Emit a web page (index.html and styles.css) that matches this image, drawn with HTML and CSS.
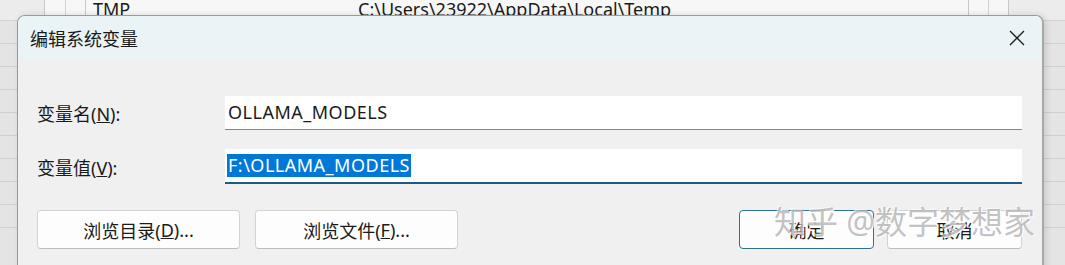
FILE: index.html
```html
<!DOCTYPE html>
<html lang="zh-CN">
<head>
<meta charset="utf-8">
<link rel="stylesheet" href="styles.css">
</head>
<body>
<div class="backdrop">
  <div class="bg-row">
    <div class="bg-gutter"></div>
    <div class="bg-cell c1"></div>
    <div class="bg-cell c2"></div>
    <div class="bg-name">TMP</div>
    <div class="bg-value">C:\Users\23922\AppData\Local\Temp</div>
    <div class="bg-cell r1"></div>
    <div class="bg-cell r2"></div>
    <div class="bg-cell r3"></div>
  </div>
  <div class="bg-lines">
    <div class="bg-line"></div><div class="bg-line"></div><div class="bg-line"></div>
    <div class="bg-line"></div><div class="bg-line"></div><div class="bg-line"></div>
    <div class="bg-line"></div><div class="bg-line"></div><div class="bg-line"></div>
  </div>
</div>

<div class="dialog">
  <div class="titlebar">
    <span class="title">编辑系统变量</span>
    <svg class="close" width="16" height="16" viewBox="0 0 16 16"><path d="M1 1L15 15M15 1L1 15" stroke="#1a1a1a" stroke-width="1.3" fill="none"/></svg>
  </div>
  <div class="body">
    <div class="field">
      <label class="label">变量名(<u>N</u>):</label>
      <div class="input">OLLAMA_MODELS</div>
    </div>
    <div class="field">
      <label class="label">变量值(<u>V</u>):</label>
      <div class="input focused"><span class="sel">F:\OLLAMA_MODELS</span></div>
    </div>
    <div class="buttons">
      <div class="btn wide">浏览目录(<u>D</u>)...</div>
      <div class="btn wide">浏览文件(<u>F</u>)...</div>
      <div class="spacer"></div>
      <div class="btn narrow primary">确定</div>
      <div class="btn narrow">取消</div>
    </div>
  </div>
  <div class="watermark">知乎 @数字梦想家</div>
</div>
</body>
</html>
```

FILE: styles.css
```css
* { box-sizing: border-box; }
html, body {
  margin: 0;
  padding: 0;
  width: 1065px;
  height: 265px;
  overflow: hidden;
  background: #e6e6e6;
  font-family: "Noto Sans", "Noto Sans CJK SC", sans-serif;
  color: #1a1a1a;
}
.backdrop {
  width: 1065px;
  height: 265px;
  display: flex;
  flex-direction: column;
}
.bg-row {
  display: flex;
  height: 24px;
  margin-top: -3px;
  background: #f7f7f7;
  border-bottom: 1px solid #d6d6d6;
  font-size: 18px;
  line-height: 24px;
}
.bg-gutter { width: 45px; background: #ececec; border-right: 1px solid #c8c8c8; }
.bg-cell.c1 { width: 21px; border-right: 1px solid #d2d2d2; }
.bg-cell.c2 { width: 20px; border-right: 1px solid #c8c8c8; }
.bg-name { width: 272px; padding-left: 7px; }
.bg-value { width: 610px; }
.bg-cell.r1 { width: 20px; border-left: 1px solid #c8c8c8; }
.bg-cell.r2 { width: 20px; border-left: 1px solid #d2d2d2; }
.bg-cell.r3 { flex: 1; border-left: 1px solid #c8c8c8; background: #ececec; }
.bg-lines {
  flex: 1;
  display: flex;
  flex-direction: column;
  background: #e4e4e4;
}
.bg-line { height: 23px; border-bottom: 1px solid #cfcfcf; }

.dialog {
  position: absolute;
  left: 17px;
  top: 15px;
  width: 1027px;
  height: 270px;
  border: 1px solid #9a9a9a;
  border-right: 2px solid #a8a8a8;
  border-radius: 8px 8px 0 0;
  background: #f0f0f0;
  box-shadow: 2px 0 6px rgba(0,0,0,0.12);
  overflow: hidden;
}
.titlebar {
  height: 44px;
  background: #eaf4f6;
  display: flex;
  align-items: center;
  justify-content: space-between;
  padding: 0 17px 0 12px;
}
.title { font-size: 18px; position: relative; top: 0; }
.close { display: block; }
.body {
  padding: 36px 20px 0 19px;
  display: flex;
  flex-direction: column;
}
.field {
  display: flex;
  align-items: center;
  height: 34px;
  margin-bottom: 19px;
}
.field + .field { height: 35px; margin-bottom: 26px; }
.label { width: 188px; font-size: 18px; flex-shrink: 0; }
.input {
  flex: 1;
  height: 34px;
  background: #fff;
  border-bottom: 1px solid #868686;
  font-size: 18px;
  letter-spacing: 0.5px;
  padding: 0 0 0 3px;
  line-height: 32px;
}
.input.focused {
  height: 35px;
  border-bottom: 2px solid #1d5b86;
  padding-left: 2px;
}
.sel {
  background: #0078d7;
  color: #fff;
  display: inline-block;
  line-height: 23px;
  padding: 0 1px;
  margin-top: 3px;
}
.buttons { display: flex; align-items: center; }
.btn {
  height: 39px;
  background: #fdfdfd;
  border: 1px solid #d3d3d3;
  border-bottom-color: #bdbdbd;
  border-radius: 4px;
  font-size: 18px;
  display: flex;
  align-items: center;
  justify-content: center;
}
.btn.wide { width: 203px; }
.btn.wide + .btn.wide { margin-left: 15px; }
.btn.narrow { width: 135px; }
.btn.primary { border: 1px solid #2f6f90; }
.btn.narrow + .btn.narrow { margin-left: 13px; }
.spacer { flex: 1; }
.watermark {
  position: absolute;
  left: 756px;
  top: 186px;
  font-size: 32px;
  line-height: 40px;
  color: rgba(120,120,120,0.45);
  text-shadow: 1px 1px 0 rgba(255,255,255,0.9), -1px -1px 0 rgba(255,255,255,0.6);
  white-space: nowrap;
}
```
